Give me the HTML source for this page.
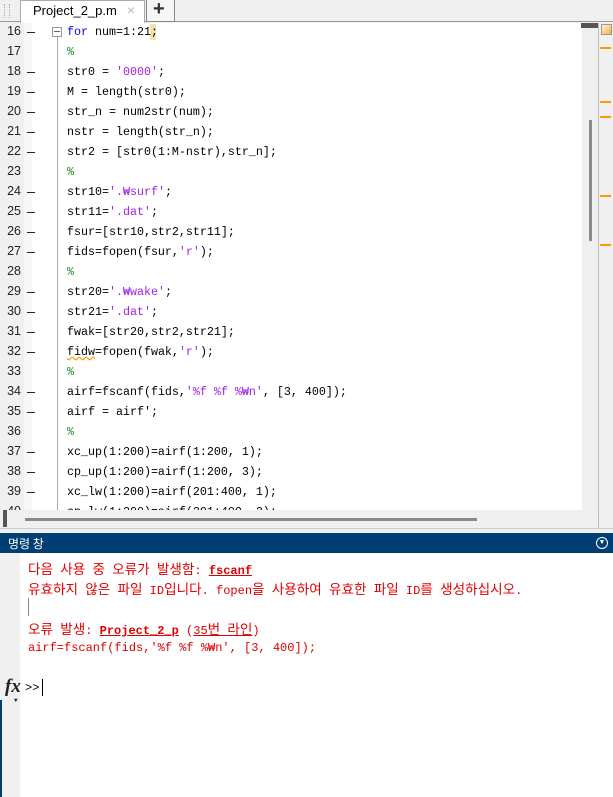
<!DOCTYPE html>
<html><head><meta charset="utf-8"><style>
*{margin:0;padding:0;box-sizing:border-box}
body{width:613px;height:797px;overflow:hidden;background:#f0f0f0;position:relative;font-family:"Liberation Mono","Noto Sans CJK KR",monospace}
.abs{position:absolute}
.ln{position:absolute;left:0;width:21px;text-align:right;font-size:12.5px;color:#222;font-family:"Liberation Sans",sans-serif}
.code{position:absolute;left:67px;font-size:11.67px;white-space:pre;color:#000}
.d{position:absolute;left:27px;width:8px;height:1px;background:#222}
.k{color:#0000ff}.s{color:#a020f0}.c{color:#228b22}
.m{position:absolute;left:600px;width:11px;height:2px;background:#f90}
.r{color:#e00000;font-family:"Liberation Mono","Noto Sans CJK KR",monospace;font-size:12px;position:absolute;left:28px;white-space:pre;line-height:16px}
.h{font-family:"Noto Sans CJK KR",sans-serif;font-size:13.6px;line-height:16px}
</style></head><body>
<div class="abs" style="left:0;top:0;width:613px;height:22px;background:#f0f0f0;border-bottom:1px solid #999"></div>
<div class="abs" style="left:4px;top:4px;width:6px;height:14px;border-left:1px dotted #aaa;border-right:1px dotted #aaa"></div>
<div class="abs" style="left:20px;top:0;width:125px;height:23px;background:#fff;border:1px solid #aaa;border-bottom:none"></div>
<div class="abs" style="left:33px;top:3px;font-family:'Liberation Sans',sans-serif;font-size:13px;color:#000">Project_2_p.m</div>
<div class="abs" style="left:127px;top:2px;font-family:'Liberation Sans',sans-serif;font-size:14px;color:#bbb">×</div>
<div class="abs" style="left:146px;top:0;width:29px;height:22px;background:#f5f5f5;border:1px solid #888;border-top:none"></div>
<div class="abs" style="left:153px;top:-2px;font-family:'Liberation Sans',sans-serif;font-size:20px;font-weight:bold;color:#333">+</div>
<div class="abs" style="left:0;top:23px;width:24px;height:487px;background:#f0f0f0"></div>
<div class="abs" style="left:24px;top:23px;width:8px;height:487px;background:#f7f7f7"></div>
<div class="abs" style="left:32px;top:23px;width:550px;height:487px;background:#fff"></div>
<div class="abs" style="left:582px;top:23px;width:16px;height:487px;background:#efefef"></div>
<div class="abs" style="left:589px;top:120px;width:3px;height:121px;background:#8a8a8a"></div>
<div class="abs" style="left:581px;top:23px;width:17px;height:5px;background:#555"></div>
<div class="abs" style="left:598px;top:23px;width:1px;height:505px;background:#bbb"></div>
<div class="abs" style="left:599px;top:23px;width:14px;height:505px;background:#f0f0f0"></div>
<div class="abs" style="left:601px;top:24px;width:11px;height:11px;background:linear-gradient(135deg,#fff3d8,#f8b040);border:1px solid #999"></div>
<div class="m" style="top:47px"></div><div class="m" style="top:101px"></div><div class="m" style="top:116px"></div><div class="m" style="top:195px"></div><div class="m" style="top:244px"></div>
<div class="abs" style="left:52px;top:27px;width:10px;height:10px;border:1px solid #999;background:#fff"></div>
<div class="abs" style="left:54px;top:31px;width:6px;height:1px;background:#666"></div>
<div class="abs" style="left:57px;top:37px;width:1px;height:473px;background:#aaa"></div>
<div class="abs" style="left:150px;top:24px;width:6px;height:16px;background:#f7e0b0"></div>
<div id="lines"></div>
<script>
var L=[["16",1,'<span class="k">for</span> num=1:21;'],["17",0,'<span class="c">%</span>'],["18",1,"str0 = <span class=\"s\">'0000'</span>;"],["19",1,"M = length(str0);"],["20",1,"str_n = num2str(num);"],["21",1,"nstr = length(str_n);"],["22",1,"str2 = [str0(1:M-nstr),str_n];"],["23",0,'<span class="c">%</span>'],["24",1,"str10=<span class=\"s\">'.₩surf'</span>;"],["25",1,"str11=<span class=\"s\">'.dat'</span>;"],["26",1,"fsur=[str10,str2,str11];"],["27",1,"fids=fopen(fsur,<span class=\"s\">'r'</span>);"],["28",0,'<span class="c">%</span>'],["29",1,"str20=<span class=\"s\">'.₩wake'</span>;"],["30",1,"str21=<span class=\"s\">'.dat'</span>;"],["31",1,"fwak=[str20,str2,str21];"],["32",1,"<span style=\"text-decoration:underline wavy #f90\">fidw</span>=fopen(fwak,<span class=\"s\">'r'</span>);"],["33",0,'<span class="c">%</span>'],["34",1,"airf=fscanf(fids,<span class=\"s\">'%f %f %₩n'</span>, [3, 400]);"],["35",1,"airf = airf';"],["36",0,'<span class="c">%</span>'],["37",1,"xc_up(1:200)=airf(1:200, 1);"],["38",1,"cp_up(1:200)=airf(1:200, 3);"],["39",1,"xc_lw(1:200)=airf(201:400, 1);"],["40",1,"cp_lw(1:200)=airf(201:400, 3);"]];
var h="";L.forEach(function(l,i){var y=24+i*20;h+='<div class="ln" style="top:'+y+'px">'+l[0]+'</div>'+(l[1]?'<div class="d" style="top:'+(y+8)+'px"></div>':'')+'<div class="code" style="top:'+(y+1)+'px">'+l[2]+'</div>';});
document.getElementById("lines").innerHTML=h;
</script>
<div class="abs" style="left:0;top:510px;width:598px;height:18px;background:#f0f0f0"></div>
<div class="abs" style="left:3px;top:510px;width:4px;height:17px;background:#555"></div>
<div class="abs" style="left:25px;top:518px;width:452px;height:3px;background:#8a8a8a"></div>
<div class="abs" style="left:0;top:528px;width:613px;height:6px;background:#f0f0f0;border-top:1px solid #ccc"></div>
<div class="abs" style="left:0;top:533px;width:613px;height:20px;background:#003e73"></div>
<div class="abs" style="left:8px;top:535px;color:#fff;font-family:'Noto Sans CJK KR',sans-serif;font-size:12px">명령 창</div>
<div class="abs" style="left:596px;top:537px;width:12px;height:12px;border:1px solid #fff;border-radius:50%;color:#fff;font-size:7px;text-align:center;line-height:10px">▼</div>
<div class="abs" style="left:0;top:553px;width:613px;height:244px;background:#fff"></div>
<div class="abs" style="left:0;top:553px;width:20px;height:244px;background:#f0f0f0"></div>
<div class="abs" style="left:0;top:700px;width:2px;height:97px;background:#003e73"></div>
<div class="r" style="top:560px"><span class="h">다음</span> <span class="h">사용</span> <span class="h">중</span> <span class="h">오류가</span> <span class="h">발생함</span>: <b style="text-decoration:underline">fscanf</b></div>
<div class="r" style="top:580px"><span class="h">유효하지</span> <span class="h">않은</span> <span class="h">파일</span> ID<span class="h">입니다</span>. fopen<span class="h">을</span> <span class="h">사용하여</span> <span class="h">유효한</span> <span class="h">파일</span> ID<span class="h">를</span> <span class="h">생성하십시오</span>.</div>
<div class="abs" style="left:28px;top:598px;width:1px;height:18px;background:#888"></div>
<div class="r" style="top:620px"><span class="h">오류</span> <span class="h">발생</span>: <b style="text-decoration:underline">Project_2_p</b> (<span style="text-decoration:underline">35<span class="h">번</span> <span class="h">라인</span></span>)</div>
<div class="r" style="top:640px">airf=fscanf(fids,'%f %f %₩n', [3, 400]);</div>
<div class="abs" style="left:5px;top:676px;font-family:'Liberation Serif',serif;font-style:italic;font-weight:bold;font-size:19px;color:#222">fx</div>
<div class="abs" style="left:14px;top:697px;font-size:6px;color:#222">▼</div>
<div class="abs" style="left:25px;top:681px;font-size:12px;color:#000">&gt;&gt;</div>
<div class="abs" style="left:42px;top:679px;width:1px;height:17px;background:#000"></div>
</body></html>
